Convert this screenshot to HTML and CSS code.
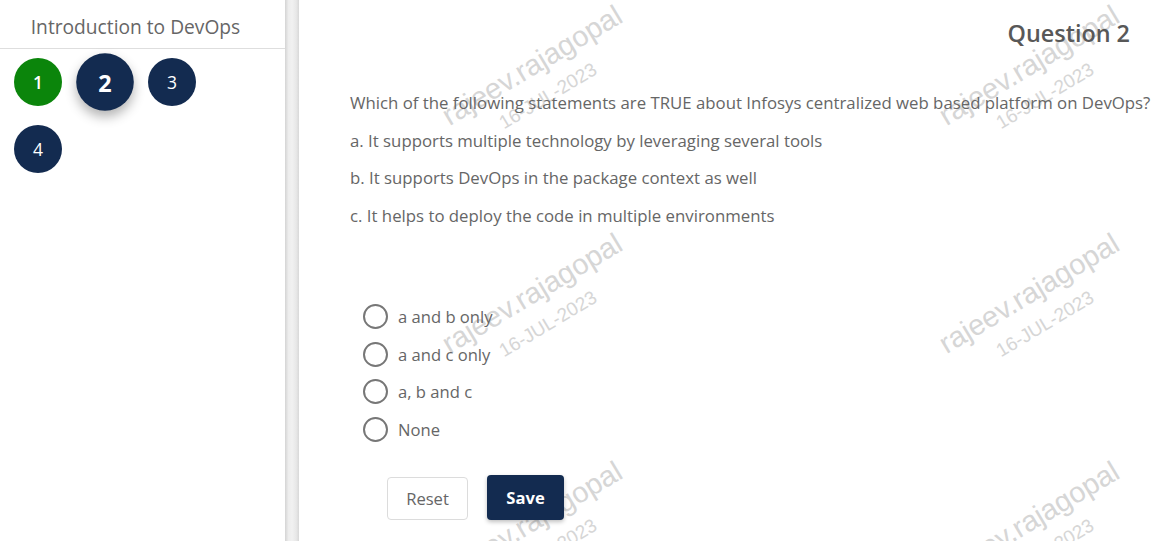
FILE: index.html
```html
<!DOCTYPE html>
<html lang="en">
<head>
<meta charset="utf-8">
<title>Introduction to DevOps - Question 2</title>
<link rel="stylesheet" href="styles.css">
</head>
<body>
<div class="page">
  <aside class="sidebar">
    <div class="sidebar-title">Introduction to DevOps</div>
    <div class="q-nav">
      <span class="q-dot done">1</span>
      <span class="q-dot active">2</span>
      <span class="q-dot">3</span>
      <span class="q-dot">4</span>
    </div>
  </aside>
  <div class="divider"></div>
  <main class="main">
    <div class="watermarks" aria-hidden="true">
      <div class="wm"><span class="wm-name">rajeev.rajagopal</span><span class="wm-date">16-JUL-2023</span></div>
      <div class="wm"><span class="wm-name">rajeev.rajagopal</span><span class="wm-date">16-JUL-2023</span></div>
      <div class="wm"><span class="wm-name">rajeev.rajagopal</span><span class="wm-date">16-JUL-2023</span></div>
      <div class="wm"><span class="wm-name">rajeev.rajagopal</span><span class="wm-date">16-JUL-2023</span></div>
      <div class="wm"><span class="wm-name">rajeev.rajagopal</span><span class="wm-date">16-JUL-2023</span></div>
      <div class="wm"><span class="wm-name">rajeev.rajagopal</span><span class="wm-date">16-JUL-2023</span></div>
    </div>
    <h2 class="q-title">Question 2</h2>
    <div class="q-body">
      <div class="q-line">Which of the following statements are TRUE about Infosys centralized web based platform on DevOps?</div>
      <div class="q-line">a. It supports multiple technology by leveraging several tools</div>
      <div class="q-line">b. It supports DevOps in the package context as well</div>
      <div class="q-line">c. It helps to deploy the code in multiple environments</div>
    </div>
    <div class="options">
      <label class="option"><span class="radio"></span><span>a and b only</span></label>
      <label class="option"><span class="radio"></span><span>a and c only</span></label>
      <label class="option"><span class="radio"></span><span>a, b and c</span></label>
      <label class="option"><span class="radio"></span><span>None</span></label>
    </div>
    <div class="actions">
      <button class="btn btn-reset">Reset</button>
      <button class="btn btn-save">Save</button>
    </div>
  </main>
</div>
</body>
</html>
```

FILE: styles.css
```css
* { box-sizing: border-box; }
html, body {
  margin: 0;
  padding: 0;
  background: #fff;
}
body {
  font-family: "Open Sans", "Noto Sans", sans-serif;
  color: #666;
  overflow: hidden;
}
.page {
  display: flex;
  height: 541px;
  width: 1174px;
}
.sidebar {
  width: 285px;
  flex: 0 0 285px;
  background: #fff;
}
.sidebar-title {
  font-size: 19.2px;
  line-height: 26px;
  padding: 14px 14px 8px 0;
  text-align: center;
  color: #666;
  border-bottom: 1px solid #dedede;
}
.q-nav {
  display: flex;
  flex-wrap: wrap;
  width: 205px;
  padding: 9px 0 0 14px;
  gap: 19px 19px;
}
.q-dot {
  width: 48px;
  height: 48px;
  border-radius: 50%;
  background: #132b50;
  color: #fff;
  display: flex;
  align-items: center;
  justify-content: center;
  font-size: 17.5px;
  font-weight: 400;
}
.q-dot.done {
  background: #0b850b;
  font-weight: 600;
}
.q-dot.active {
  transform: scale(1.2);
  font-size: 19.5px;
  font-weight: 700;
  box-shadow: 0 5px 10px rgba(0, 0, 0, 0.3);
}
.divider {
  width: 14px;
  flex: 0 0 14px;
  background: linear-gradient(to right, #d4d4d4 0%, #ededed 25%, #f1f1f1 50%, #e8e8e8 80%, #d8d8d8 100%);
}
.main {
  flex: 1;
  position: relative;
  overflow: hidden;
  padding: 17px 44px 0 51px;
}
.watermarks {
  position: absolute;
  left: -8px;
  top: -36px;
  display: grid;
  grid-template-columns: repeat(2, 497px);
  grid-auto-rows: 228px;
  pointer-events: none;
  z-index: 0;
}
.wm {
  display: flex;
  flex-direction: column;
  align-items: center;
  justify-content: center;
  transform: rotate(-31deg);
  font-family: "Liberation Sans", Arial, sans-serif;
  color: #d6d6d6;
}
.wm-name {
  font-size: 29px;
  line-height: 32px;
}
.wm-date {
  font-size: 19px;
  line-height: 22px;
  margin-top: 8px;
  padding-right: 4px;
}
.q-title, .q-body, .options, .actions {
  position: relative;
  z-index: 1;
}
.q-title {
  margin: 0;
  text-align: right;
  font-size: 23.4px;
  line-height: 32px;
  font-weight: 600;
  color: #585858;
}
.q-body {
  margin-top: 35px;
  font-size: 16.8px;
}
.q-line {
  line-height: 37.5px;
  white-space: nowrap;
}
.options {
  margin: 64px 0 0 13px;
  display: flex;
  flex-direction: column;
}
.option {
  display: flex;
  align-items: center;
  gap: 10px;
  height: 37.5px;
  font-size: 16.6px;
}
.radio {
  width: 25px;
  height: 25px;
  border: 2px solid #777;
  border-radius: 50%;
  background: transparent;
}
.actions {
  margin: 27px 0 0 37px;
  display: flex;
  align-items: flex-end;
  gap: 19px;
}
.btn {
  font-family: "Open Sans", "Noto Sans", sans-serif;
  font-size: 16.6px;
  border-radius: 4px;
  cursor: pointer;
}
.btn-reset {
  width: 81px;
  height: 43px;
  background: #fff;
  border: 1px solid #dcdcdc;
  color: #666;
}
.btn-save {
  width: 77px;
  height: 45px;
  background: #132b50;
  border: none;
  color: #fff;
  font-weight: 700;
  box-shadow: 0 2px 4px rgba(0, 0, 0, 0.25);
}
```
